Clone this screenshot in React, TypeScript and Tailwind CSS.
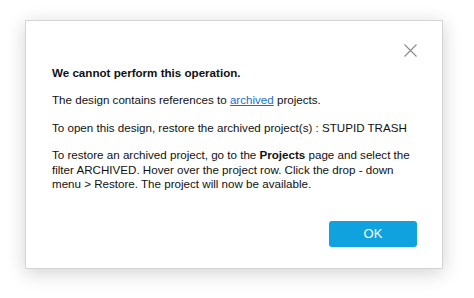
export default function App() {
  return (
    <div className="w-[474px] h-[298px] bg-white pt-[20px] pl-[25px] font-['Liberation_Sans',Arial,sans-serif] text-[11.6px] text-[#111]">
      <div className="w-[418px] h-[249px] bg-white border border-[#d4d4d4] shadow-[0_4px_18px_rgba(0,0,0,0.18)] pt-[23px] pl-[26px] pr-[25px]">
        {/* close */}
        <div className="flex justify-end">
          <svg width="13" height="13" viewBox="0 0 13 13" className="text-[#8a8a8a]">
            <path d="M0.5 0.5 L12.5 12.5 M12.5 0.5 L0.5 12.5" stroke="currentColor" strokeWidth="1.1" fill="none" />
          </svg>
        </div>

        <div className="leading-[15px]">
          <h2 className="mt-[8px] font-bold">We cannot perform this operation.</h2>
          <p className="mt-[12px]">
            The design contains references to{" "}
            <a href="#" className="text-[#1b6fc8] underline">archived</a> projects.
          </p>
          <p className="mt-[13px] whitespace-nowrap">To open this design, restore the archived project(s) : STUPID TRASH</p>
          <p className="mt-[13px] leading-[14.5px] whitespace-nowrap">
            To restore an archived project, go to the <b>Projects</b> page and select the
            <br />
            filter ARCHIVED. Hover over the project row. Click the drop - down
            <br />
            menu &gt; Restore. The project will now be available.
          </p>
        </div>

        <div className="flex justify-end mt-[29px]">
          <button className="w-[88px] h-[26px] rounded-[3px] bg-[#0fa2df] text-white text-[13px]">OK</button>
        </div>
      </div>
    </div>
  )
}
